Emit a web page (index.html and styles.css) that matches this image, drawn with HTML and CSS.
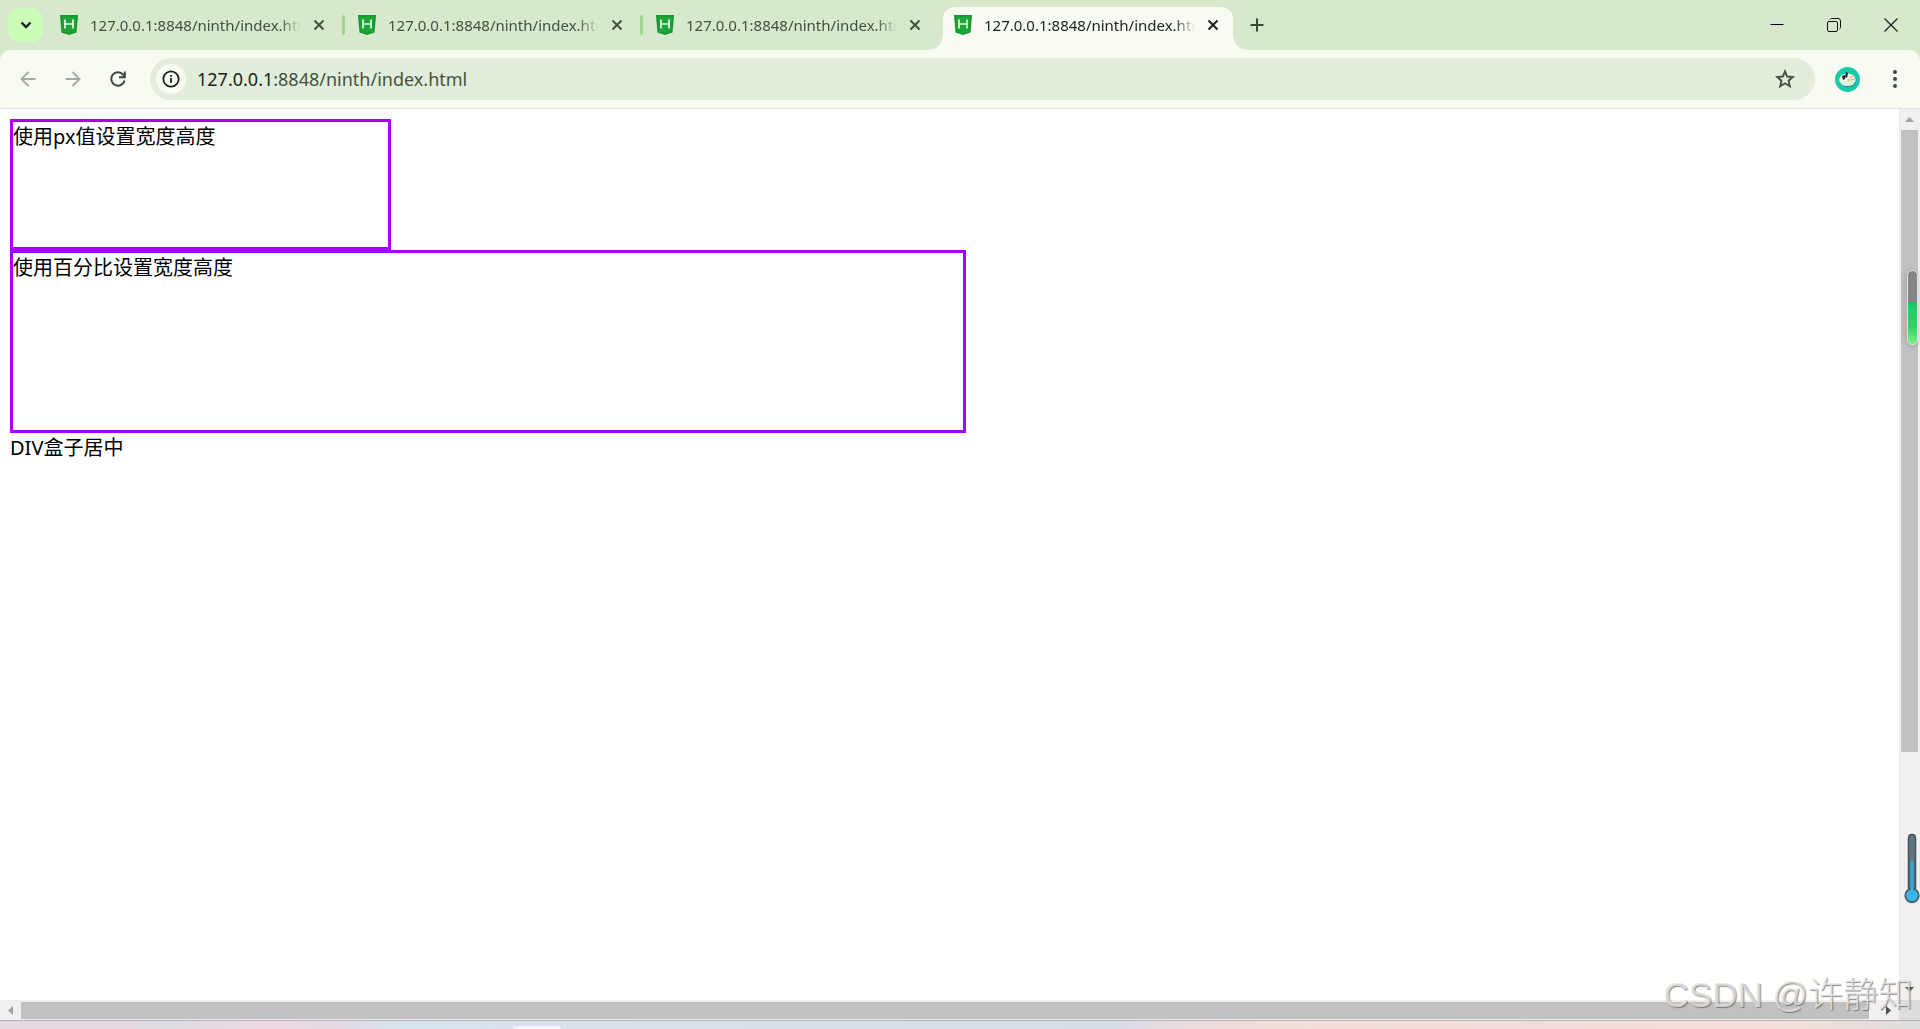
FILE: index.html
```html
<!DOCTYPE html>
<html lang="zh-CN">
<head>
    <meta charset="UTF-8">
    <meta name="viewport" content="width=device-width, initial-scale=1.0">
    <title>127.0.0.1:8848/ninth/index.html</title>
    <link rel="stylesheet" href="styles.css">
</head>
<body>
    <svg class="sprite" aria-hidden="true">
        <symbol id="favicon" viewBox="0 0 18 20">
            <path d="M0 0h18l-1.500 17.500L9 20l-7.500-2.500z" fill="#16922f"/>
            <path d="M1.500 1.500h15l-1.300 15L9 18.500l-6.200-2z" fill="#1ba637"/>
            <path d="M5 4.500v9M13 4.500v9M5 9h8" fill="none" stroke="#e6f7e6" stroke-width="1.700"/>
        </symbol>
        <symbol id="cross" viewBox="0 0 12 12">
            <path d="M1.500 1.500l9 9M10.500 1.500l-9 9" fill="none" stroke="currentColor" stroke-width="2"/>
        </symbol>
    </svg>

    <header class="tab-bar">
        <button class="tab-search" aria-label="搜索标签页">
            <svg width="12" height="8" viewBox="0 0 12 8"><path d="M1.500 1.500L6 6l4.500-4.500" fill="none" stroke="#10200c" stroke-width="2.400"/></svg>
        </button>
        <nav class="tabs">
            <div class="tab">
                <svg class="favicon"><use href="#favicon"/></svg>
                <a class="tab-title" href="#">127.0.0.1:8848/ninth/index.html</a>
                <button class="tab-close" aria-label="关闭"><svg><use href="#cross"/></svg></button>
            </div>
            <div class="tab">
                <svg class="favicon"><use href="#favicon"/></svg>
                <a class="tab-title" href="#">127.0.0.1:8848/ninth/index.html</a>
                <button class="tab-close" aria-label="关闭"><svg><use href="#cross"/></svg></button>
            </div>
            <div class="tab">
                <svg class="favicon"><use href="#favicon"/></svg>
                <a class="tab-title" href="#">127.0.0.1:8848/ninth/index.html</a>
                <button class="tab-close" aria-label="关闭"><svg><use href="#cross"/></svg></button>
            </div>
            <div class="tab active">
                <svg class="favicon"><use href="#favicon"/></svg>
                <a class="tab-title" href="#">127.0.0.1:8848/ninth/index.html</a>
                <button class="tab-close" aria-label="关闭"><svg><use href="#cross"/></svg></button>
            </div>
        </nav>
        <button class="new-tab" aria-label="新标签页">
            <svg width="14" height="14" viewBox="0 0 14 14"><path d="M7 .5v13M.5 7h13" stroke="#3a4a38" stroke-width="2"/></svg>
        </button>
        <div class="window-buttons">
            <button aria-label="最小化">
                <svg width="14" height="14" viewBox="0 0 14 14"><path d="M.5 6.500h13" stroke="#000"/></svg>
            </button>
            <button aria-label="还原">
                <svg width="14" height="14" viewBox="0 0 14 14" fill="none" stroke="#111"><rect x=".5" y="3.500" width="10" height="10" rx="1.500"/><path d="M3 1.500q.5-1 1.500-1H11q2.500 0 2.500 2.500v6.500q0 1-1 1.500"/></svg>
            </button>
            <button aria-label="关闭">
                <svg width="14" height="14" viewBox="0 0 14 14"><path d="M.5.5l13 13M13.500.5l-13 13" stroke="#222" stroke-width="1.300"/></svg>
            </button>
        </div>
    </header>

    <div class="toolbar">
        <button class="tool-button" aria-label="后退" disabled>
            <svg width="16" height="16" viewBox="0 0 16 16"><path d="M15.500 8H2M8.500 1L1.500 8l7 7" fill="none" stroke="#a4aaa0" stroke-width="1.900"/></svg>
        </button>
        <button class="tool-button" aria-label="前进" disabled>
            <svg width="16" height="16" viewBox="0 0 16 16"><path d="M.5 8H14M7.500 1l7 7-7 7" fill="none" stroke="#a4aaa0" stroke-width="1.900"/></svg>
        </button>
        <button class="tool-button" aria-label="重新加载">
            <svg width="16" height="16" viewBox="0 0 16 16"><path d="M14.500 9.500A6.700 6.700 0 1 1 13 3.500l1.300 2" fill="none" stroke="#3a4a38" stroke-width="2"/><path d="M15.800.5v6.700H9V5.300h4.900V.5z" fill="#3a4a38"/></svg>
        </button>
        <div class="address">
            <button class="site-info" aria-label="查看网站信息">
                <svg width="18" height="18" viewBox="0 0 18 18"><circle cx="9" cy="9" r="7.700" fill="none" stroke="#1b2419" stroke-width="1.800"/><path d="M9 8v5M9 5v1.800" stroke="#1b2419" stroke-width="1.800"/></svg>
            </button>
            <a class="url" href="#"><span class="host">127.0.0.1</span>:8848/ninth/index.html</a>
            <button class="bookmark" aria-label="添加书签">
                <svg width="20" height="20" viewBox="0 0 20 20"><path d="M10 2.300l2.200 5.200 5.600.5-4.200 3.700 1.200 5.500L10 14.300l-4.800 2.900 1.200-5.500L2.200 8l5.600-.5z" fill="none" stroke="#465044" stroke-width="1.900"/></svg>
            </button>
        </div>
        <button class="avatar" aria-label="用户">
            <svg width="25" height="25" viewBox="0 0 25 25">
                <circle cx="12.500" cy="12.500" r="12.500" fill="#18cba8"/>
                <ellipse cx="13" cy="13.500" rx="8.500" ry="6.500" fill="#148e7e"/>
                <ellipse cx="12.500" cy="12.800" rx="8.300" ry="6.300" fill="#f3f5e9"/>
                <path d="M5 13q7 3 15-1-1 6-7 6-6 0-8-5z" fill="#d5f4ed"/>
                <path d="M11 5l2 1-1 5-2-1zM7 9l3-1v4l-2 1z" fill="#0b2537"/>
                <path d="M14 11l5-2M15 13l5-1" stroke="#ef9b9b"/>
                <path d="M12.500 13h2" stroke="#f0cf32" stroke-width="2"/>
            </svg>
        </button>
        <button class="menu" aria-label="菜单">
            <svg width="6" height="20" viewBox="0 0 6 20" fill="#3a4a38"><circle cx="3" cy="3" r="2"/><circle cx="3" cy="10" r="2"/><circle cx="3" cy="17" r="2"/></svg>
        </button>
    </div>

    <div class="viewport">
        <main class="page">
            <div class="box box-px">使用px值设置宽度高度</div>
            <div class="box box-percent">使用百分比设置宽度高度</div>
            <div>DIV盒子居中</div>
        </main>
        <div class="scrollbar vertical">
            <svg width="9" height="5" viewBox="0 0 9 5"><path d="M0 5l4.500-5L9 5z" fill="#a3a3a3"/></svg>
            <div class="track"><div class="thumb"></div></div>
            <svg width="9" height="5" viewBox="0 0 9 5"><path d="M0 0l4.500 5L9 0z" fill="#505050"/></svg>
        </div>
        <div class="scrollbar horizontal">
            <svg width="5" height="9" viewBox="0 0 5 9"><path d="M5 0L0 4.500 5 9z" fill="#a3a3a3"/></svg>
            <div class="track"><div class="thumb"></div></div>
            <svg width="5" height="9" viewBox="0 0 5 9"><path d="M0 0l5 4.500L0 9z" fill="#505050"/></svg>
        </div>
        <div class="corner"></div>
        <div class="gauge"></div>
        <svg class="thermometer" width="16" height="72" viewBox="0 0 16 72">
            <path d="M4.500 57V5q0-3.500 3.500-3.500T11.500 5v52" fill="#65757c" stroke="#43535c" stroke-width="1.500"/>
            <circle cx="8" cy="62.500" r="6.700" fill="#37b9e9" stroke="#53646d" stroke-width="2"/>
            <path d="M8 28v34" stroke="#2daee0" stroke-width="3"/>
        </svg>
        <div class="watermark">CSDN @许静知</div>
    </div>

    <footer class="taskbar"><div class="taskbar-item"></div></footer>
</body>
</html>
```
FILE: styles.css
```css
* {
    box-sizing: border-box;
}
body {
    margin: 0;
    height: 100vh;
    display: flex;
    flex-direction: column;
    overflow: hidden;
    background-color: #d7e8cd;
    font-family: "Noto Sans", "Noto Sans CJK SC", sans-serif;
}
button {
    display: flex;
    flex: none;
    align-items: center;
    justify-content: center;
    padding: 0;
    border: none;
    background: none;
}
a {
    color: inherit;
    text-decoration: none;
}
.sprite {
    position: absolute;
    width: 0;
    height: 0;
}

/* tabs */
.tab-bar {
    display: flex;
    flex: none;
    height: 50px;
}
.tab-search {
    width: 35px;
    height: 34px;
    margin: 8px 6px 8px 8px;
    border-radius: 12px;
    background-color: #cbffb9;
}
.tabs {
    display: flex;
    gap: 8px;
    padding-top: 7px;
}
.tab {
    position: relative;
    display: flex;
    align-items: center;
    width: 290px;
    height: 43px;
    padding: 0 14px 7px 11px;
    border-radius: 12px 12px 0 0;
    color: #42523e;
}
.tab:nth-child(-n+2)::after {
    content: "";
    position: absolute;
    top: 8px;
    right: -6px;
    width: 3px;
    height: 20px;
    border-radius: 2px;
    background-color: #a0d78f;
}
.tab.active {
    background-color: #f8fbf2;
    color: #1a2118;
}
/* rounded feet of the selected tab */
.tab.active::before,
.tab.active::after {
    content: "";
    position: absolute;
    bottom: 0;
    width: 14px;
    height: 14px;
}
.tab.active::before {
    left: -14px;
    background: radial-gradient(circle at 0 0, transparent 13px, #f8fbf2 14px);
}
.tab.active::after {
    right: -14px;
    background: radial-gradient(circle at 100% 0, transparent 13px, #f8fbf2 14px);
}
.favicon {
    flex: none;
    width: 18px;
    height: 20px;
    margin-right: 12px;
}
.tab-title {
    flex: 1;
    overflow: hidden;
    white-space: nowrap;
    font-size: 15px;
    line-height: 20px;
    -webkit-mask-image: linear-gradient(to right, #000 90%, transparent);
    mask-image: linear-gradient(to right, #000 90%, transparent);
}
.tab-close {
    width: 12px;
    height: 20px;
    margin-left: 12px;
    color: inherit;
}
.tab-close svg {
    width: 12px;
    height: 12px;
}
.new-tab {
    width: 48px;
}
.window-buttons {
    display: flex;
    margin-left: auto;
    padding-right: 1px;
}
.window-buttons button {
    width: 57px;
}

/* toolbar */
.toolbar {
    display: flex;
    flex: none;
    align-items: center;
    height: 59px;
    padding: 0 10px 0 5px;
    border-bottom: 1px solid #dfe3d8;
    border-radius: 10px 10px 0 0;
    background-color: #f8fbf2;
}
.tool-button {
    width: 45px;
    height: 42px;
}
.address {
    display: flex;
    flex: 1;
    align-items: center;
    height: 42px;
    margin-left: 10px;
    padding: 0 20px 0 6px;
    border-radius: 21px;
    background-color: #e3eddb;
}
.site-info {
    width: 30px;
    height: 30px;
    margin-right: 11px;
    border-radius: 50%;
    background-color: #f8fbf2;
}
.url {
    flex: 1;
    font-size: 18px;
    line-height: 24px;
    color: #42523e;
}
.host {
    color: #1a2118;
}
.avatar {
    width: 64px;
}
.menu {
    width: 31px;
    height: 42px;
}

/* page area */
.viewport {
    position: relative;
    display: grid;
    flex: 1;
    grid-template-columns: 1fr 21px;
    grid-template-rows: 1fr 20px;
    min-height: 0;
}
.page {
    padding: 10px;
    overflow: hidden;
    background-color: #fff;
    font-size: 20px;
    line-height: 29px;
    color: #000;
}
.box {
    border: 3px solid #a600ff;
}
.box-px {
    width: 381px;
    height: 131px;
}
.box-percent {
    width: 50.9%;
    height: 183px;
}
.scrollbar {
    display: flex;
    align-items: center;
    background-color: #f0f0f0;
}
.scrollbar svg {
    flex: none;
    margin: 8px;
}
.track {
    flex: 1;
}
.thumb {
    background-color: #c1c1c1;
}
.vertical {
    flex-direction: column;
}
.vertical .track {
    width: 17px;
}
.vertical .thumb {
    height: 73.3%;
}
.horizontal .track {
    height: 17px;
}
.horizontal .thumb {
    width: 99.5%;
    height: 100%;
}
.corner {
    background-color: #dcdcdc;
}

/* floating widgets */
.gauge {
    position: absolute;
    top: 161px;
    right: 2px;
    width: 11px;
    height: 75px;
    border: 1px solid #e2e2e2;
    border-radius: 6px;
    background: linear-gradient(#858585 42%, #18b65c 42%, #22cc69 48%, #30d267 76%, #7cf080);
    box-shadow: 0 1px 6px rgba(0, 0, 0, 0.2);
}
.thermometer {
    position: absolute;
    right: 0;
    bottom: 115px;
}
.watermark {
    position: absolute;
    right: 7px;
    bottom: 2px;
    font-family: "Liberation Sans", "Noto Sans CJK SC", sans-serif;
    font-size: 35px;
    font-weight: 300;
    line-height: 46px;
    color: rgba(232, 232, 232, 0.8);
    text-shadow: 1px 1px 1px rgba(90, 90, 90, 0.7);
}

.taskbar {
    display: flex;
    flex: none;
    align-items: flex-end;
    height: 9px;
    padding-left: 513px;
    border-top: 1px solid #b3b0b8;
    background: linear-gradient(to right, #e2d9e1, #e6d8e1 5%, #dedbe2 9%, #efd8e3 14%, #e2dae4 18%, #d5e6f0 21%, #dbe0ed 28%, #d6dce8 58%, #eddcdd 62%, #f3e0d8 68%, #f3dddb 80%, #f5e2d9 93%, #dddcdc);
}
.taskbar-item {
    width: 48px;
    height: 3px;
    border-radius: 3px 3px 0 0;
    background-color: #f2f5fa;
}
```
